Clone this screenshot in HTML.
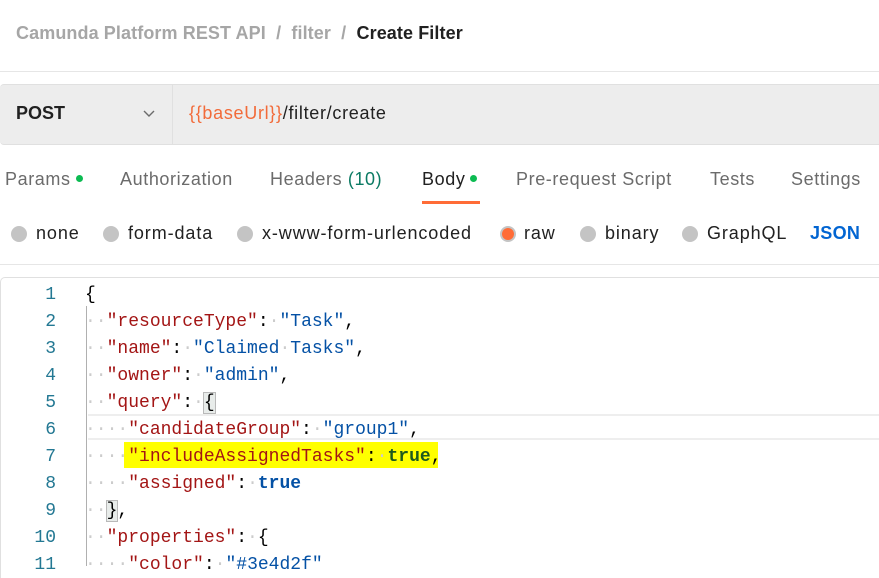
<!DOCTYPE html>
<html><head><meta charset="utf-8"><style>
body{margin:0;width:879px;height:564px;overflow:hidden;background:#fff;font-family:"Liberation Sans",sans-serif;position:relative}
.a{position:absolute;white-space:pre}
.crumb{top:23px;left:16px;font-size:18px;font-weight:bold;color:#a6a6a6;letter-spacing:0.1px}
.crumb b{color:#212121}
.tab{top:169px;font-size:18px;color:#6b6b6b;letter-spacing:0.6px}
.dot{display:inline-block;width:7px;height:7px;border-radius:50%;background:#0cbb52;margin-left:5px;vertical-align:3px}
.rad{position:absolute;top:226px;width:16px;height:16px;border-radius:50%;background:#c4c4c4}
.rl{top:223px;font-size:18px;color:#212121;letter-spacing:0.9px}
.ln{position:absolute;width:56px;text-align:right;font-family:"Liberation Mono",monospace;font-size:18px;color:#237893}
.cl{position:absolute;left:85px;font-family:"Liberation Mono",monospace;font-size:18px;color:#000;white-space:pre}
.k{color:#a31515}.s{color:#0451a5}.t{color:#0451a5;font-weight:bold}.d{color:#ccc}
.br{background:#e8ecea;outline:1px solid #b9b9b9}
</style></head><body>
<div class="a crumb">Camunda Platform REST API  /  filter  /  <b>Create Filter</b></div>
<div style="position:absolute;top:71px;left:0;width:879px;height:1px;background:#e6e6e6"></div>
<div style="position:absolute;top:84px;left:0;width:879px;height:59px;background:#ededed;border-top:1px solid #e0e0e0;border-bottom:1px solid #e0e0e0;border-radius:4px 0 0 4px"></div>
<div style="position:absolute;top:84px;left:172px;width:1px;height:60px;background:#e0e0e0"></div>
<div class="a" style="top:103px;left:16px;font-size:18px;font-weight:bold;color:#212121">POST</div>
<svg style="position:absolute;left:142px;top:109px" width="14" height="10"><path d="M2 2 L7 7 L12 2" stroke="#6b6b6b" stroke-width="1.4" fill="none"/></svg>
<div class="a" style="top:103px;left:189px;font-size:18px;color:#212121;letter-spacing:0.7px"><span style="color:#f26b3a">{{baseUrl}}</span>/filter/create</div>
<div class="a tab" style="left:5px">Params<span class="dot"></span></div>
<div class="a tab" style="left:120px">Authorization</div>
<div class="a tab" style="left:270px">Headers <span style="color:#0b7a63">(10)</span></div>
<div class="a tab" style="left:422px;color:#212121">Body<span class="dot"></span></div>
<div style="position:absolute;top:201px;left:422px;width:58px;height:3px;background:#ff6c37"></div>
<div class="a tab" style="left:516px">Pre-request Script</div>
<div class="a tab" style="left:710px">Tests</div>
<div class="a tab" style="left:791px">Settings</div>
<div class="rad" style="left:11px"></div><div class="a rl" style="left:36px">none</div>
<div class="rad" style="left:103px"></div><div class="a rl" style="left:128px">form-data</div>
<div class="rad" style="left:237px"></div><div class="a rl" style="left:262px">x-www-form-urlencoded</div>
<div class="rad" style="background:#ff6c37;box-shadow:0 0 0 2px #c4c4c4;width:12px;height:12px;top:228px;left:502px"></div><div class="a rl" style="left:524px">raw</div>
<div class="rad" style="left:580px"></div><div class="a rl" style="left:605px">binary</div>
<div class="rad" style="left:682px"></div><div class="a rl" style="left:707px">GraphQL</div>
<div class="a rl" style="left:810px;color:#0265d2;font-weight:bold;letter-spacing:0.3px">JSON</div>
<div style="position:absolute;top:264px;left:0;width:879px;height:1px;background:#e6e6e6"></div>
<div style="position:absolute;top:277px;left:0;width:879px;height:300px;border-top:1px solid #e0e0e0;border-left:1px solid #e0e0e0;border-radius:5px 0 0 0"></div>
<div style="position:absolute;top:414px;left:88px;width:791px;height:2px;background:#eee"></div>
<div style="position:absolute;top:438px;left:88px;width:791px;height:2px;background:#eee"></div>
<div style="position:absolute;top:442px;left:124px;width:314px;height:26px;background:#ffff00"></div>
<div style="position:absolute;top:306px;left:86px;width:1px;height:260px;background:#b0b0b0"></div>
<div class="ln" style="top:285px">1</div><div class="cl" style="top:285px">{</div>
<div class="ln" style="top:312px">2</div><div class="cl" style="top:312px"><span class="d">··</span><span class="k">"resourceType"</span>:<span class="d">·</span><span class="s">"Task"</span>,</div>
<div class="ln" style="top:339px">3</div><div class="cl" style="top:339px"><span class="d">··</span><span class="k">"name"</span>:<span class="d">·</span><span class="s">"Claimed<span class="d">·</span>Tasks"</span>,</div>
<div class="ln" style="top:366px">4</div><div class="cl" style="top:366px"><span class="d">··</span><span class="k">"owner"</span>:<span class="d">·</span><span class="s">"admin"</span>,</div>
<div class="ln" style="top:393px">5</div><div class="cl" style="top:393px"><span class="d">··</span><span class="k">"query"</span>:<span class="d">·</span><span class="br">{</span></div>
<div class="ln" style="top:420px">6</div><div class="cl" style="top:420px"><span class="d">····</span><span class="k">"candidateGroup"</span>:<span class="d">·</span><span class="s">"group1"</span>,</div>
<div class="ln" style="top:447px">7</div><div class="cl" style="top:447px"><span class="d">····</span><span class="k">"includeAssignedTasks"</span>:<span class="d">·</span><span class="t" style="color:#1d5a1d">true</span>,</div>
<div class="ln" style="top:474px">8</div><div class="cl" style="top:474px"><span class="d">····</span><span class="k">"assigned"</span>:<span class="d">·</span><span class="t">true</span></div>
<div class="ln" style="top:501px">9</div><div class="cl" style="top:501px"><span class="d">··</span><span class="br">}</span>,</div>
<div class="ln" style="top:528px">10</div><div class="cl" style="top:528px"><span class="d">··</span><span class="k">"properties"</span>:<span class="d">·</span>{</div>
<div class="ln" style="top:555px">11</div><div class="cl" style="top:555px"><span class="d">····</span><span class="k">"color"</span>:<span class="d">·</span><span class="s">"#3e4d2f"</span></div>
</body></html>
